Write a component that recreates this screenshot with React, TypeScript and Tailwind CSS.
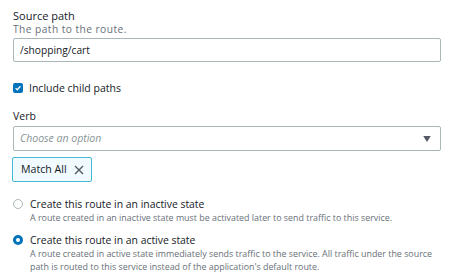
import { useState } from 'react';

const font = { fontFamily: '"Open Sans", "Noto Sans", sans-serif' };

const RouteForm = () => {
  const [path, setPath] = useState('/shopping/cart');
  const [includeChildren, setIncludeChildren] = useState(true);
  const [active, setActive] = useState(true);

  return (
    <div className="w-[474px] h-[280px] bg-white pl-[13px] pr-[33px] pt-[9px] text-[#16191f] font-['Open_Sans',sans-serif]">
      <div>
        <div className="text-[11px] leading-[14px]">Source path</div>
        <div className="text-[10.2px] leading-[12px] tracking-[0.45px] text-[#687078]">The path to the route.</div>
        <input
          value={path}
          onChange={(e) => setPath(e.target.value)}
          className="mt-[3px] block w-full h-[24px] rounded-[2px] border border-[#aab7b8] px-[6px] text-[10.2px] text-[#16191f] outline-none"
        />
      </div>

      <label className="mt-[19px] flex items-center gap-[6px] text-[10.5px] leading-[14px]">
        <span
          onClick={() => setIncludeChildren(!includeChildren)}
          className={`flex h-[10px] w-[10px] items-center justify-center rounded-[2px] ${
            includeChildren ? 'bg-[#0073bb]' : 'border border-[#aab7b8]'
          }`}
        >
          {includeChildren && (
            <svg viewBox="0 0 10 10" className="h-[8px] w-[8px]">
              <path d="M2 5.2 L4.1 7.2 L8 2.8" fill="none" stroke="white" strokeWidth="1.6" />
            </svg>
          )}
        </span>
        Include child paths
      </label>

      <div className="mt-[14px]">
        <div className="text-[10.5px] leading-[14px]">Verb</div>
        <div className="mt-[3px] flex h-[25px] items-center justify-between rounded-[2px] border border-[#aab7b8] pl-[6px] pr-[9px]">
          <span className="text-[10.5px] italic text-[#879596]">Choose an option</span>
          <svg viewBox="0 0 10 8" className="h-[6px] w-[8px]">
            <path d="M0 0 H10 L5 8 Z" fill="#545b64" />
          </svg>
        </div>
        <div className="mt-[6px] -ml-[1px] inline-flex h-[25px] items-center gap-[7px] rounded-[2px] border border-[#44b9d6] bg-[#f1faff] pl-[8px] pr-[7px] text-[10.6px]">
          Match All
          <svg viewBox="0 0 10 10" className="h-[10px] w-[10px]">
            <path d="M1 1 L9 9 M9 1 L1 9" stroke="#545b64" strokeWidth="1.4" />
          </svg>
        </div>
      </div>

      <div className="mt-[15px] flex flex-col gap-[9px]">
        <div className="flex items-start gap-[7px]" onClick={() => setActive(false)}>
          <span
            className={`mt-[2px] h-[10px] w-[10px] shrink-0 rounded-full ${
              active ? 'border border-[#aab7b8]' : 'border-[3px] border-[#0073bb]'
            }`}
          />
          <div>
            <div className="text-[10.4px] leading-[14px]">Create this route in an inactive state</div>
            <div className="text-[8.9px] leading-[13px] text-[#687078]">
              A route created in an inactive state must be activated later to send traffic to this service.
            </div>
          </div>
        </div>
        <div className="flex items-start gap-[7px]" onClick={() => setActive(true)}>
          <span
            className={`mt-[2px] h-[10px] w-[10px] shrink-0 rounded-full ${
              active ? 'border-[3px] border-[#0073bb]' : 'border border-[#aab7b8]'
            }`}
          />
          <div>
            <div className="text-[10.4px] leading-[14px]">Create this route in an active state</div>
            <div className="text-[8.9px] leading-[13px] text-[#687078]">
              A route created in active state immediately sends traffic to the service. All traffic under the source path is routed to this service instead of the application's default route.
            </div>
          </div>
        </div>
      </div>
    </div>
  );
};

export default function App() {
  return (
    <div style={font}>
      <RouteForm />
    </div>
  );
}
